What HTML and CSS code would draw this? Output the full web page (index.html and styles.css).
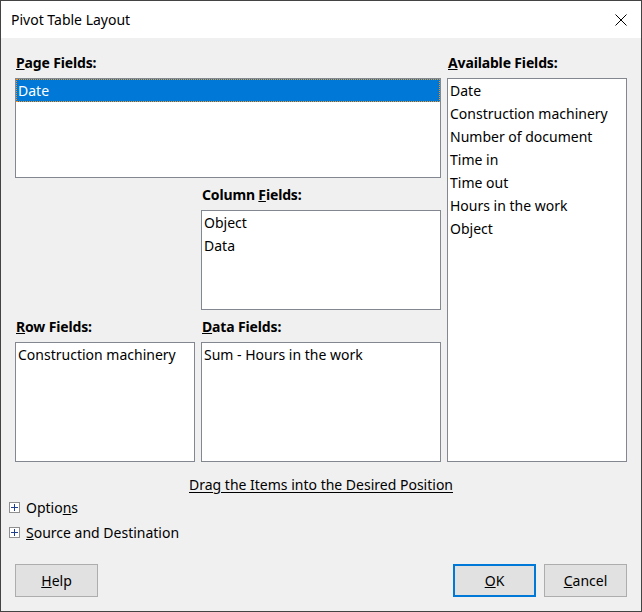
FILE: index.html
```html
<!DOCTYPE html>
<html>
<head>
<meta charset="utf-8">
<title>Pivot Table Layout</title>
<link rel="stylesheet" href="styles.css">
</head>
<body>
<div class="dialog">
  <div class="titlebar">
    <span class="title">Pivot Table Layout</span>
    <svg class="close" width="12" height="12" viewBox="0 0 12 12"><path d="M0.5 0.5 L11.5 11.5 M11.5 0.5 L0.5 11.5" stroke="#000" stroke-width="1" fill="none"/></svg>
  </div>
  <div class="content">
    <div class="layout">
      <div class="label l-page"><u>P</u>age Fields:</div>
      <div class="label l-avail"><u>A</u>vailable Fields:</div>
      <div class="list b-page">
        <div class="item selected">Date</div>
      </div>
      <div class="list b-avail">
        <div class="item">Date</div>
        <div class="item">Construction machinery</div>
        <div class="item">Number of document</div>
        <div class="item">Time in</div>
        <div class="item">Time out</div>
        <div class="item">Hours in the work</div>
        <div class="item">Object</div>
      </div>
      <div class="label l-col">Column <u>F</u>ields:</div>
      <div class="list b-col">
        <div class="item">Object</div>
        <div class="item">Data</div>
      </div>
      <div class="label l-row"><u>R</u>ow Fields:</div>
      <div class="label l-data"><u>D</u>ata Fields:</div>
      <div class="list b-row">
        <div class="item">Construction machinery</div>
      </div>
      <div class="list b-data">
        <div class="item">Sum - Hours in the work</div>
      </div>
    </div>
    <div class="hint"><span class="hint-text">Drag the Items into the Desired Position</span></div>
    <div class="expanders">
      <div class="expander"><span class="plus"></span><span>Optio<u>n</u>s</span></div>
      <div class="expander"><span class="plus"></span><span><u>S</u>ource and Destination</span></div>
    </div>
    <div class="buttons">
      <button class="btn"><u>H</u>elp</button>
      <div class="btn-group">
        <button class="btn btn-default"><u>O</u>K</button>
        <button class="btn"><u>C</u>ancel</button>
      </div>
    </div>
  </div>
</div>
</body>
</html>
```

FILE: styles.css
```css
html, body {
  margin: 0;
  padding: 0;
  background: #f0f0f0;
}

.dialog {
  width: 642px;
  height: 612px;
  box-sizing: border-box;
  border: 1px solid #434343;
  background: #f0f0f0;
  display: flex;
  flex-direction: column;
  font-family: "Noto Sans", "Open Sans", sans-serif;
  font-size: 14px;
  color: #000;
}

.titlebar {
  height: 37px;
  flex: none;
  background: #fff;
  display: flex;
  align-items: center;
  justify-content: space-between;
  padding: 0 14px 0 10px;
}

.title {
  font-size: 14px;
  line-height: 19px;
}

.close {
  display: block;
}

.content {
  flex: 1;
  display: flex;
  flex-direction: column;
  padding: 15px 14px 14px 14px;
}

.layout {
  display: grid;
  grid-template-columns: 180px 240px 180px;
  grid-template-rows: 25px 100px 32px 100px 32px 120px;
  column-gap: 6px;
}

.label {
  font-weight: bold;
  line-height: 19px;
  align-self: end;
  margin-bottom: 6px;
  padding-left: 1px;
  letter-spacing: -0.15px;
}

.l-page { grid-column: 1 / 3; grid-row: 1; }
.l-avail { grid-column: 3; grid-row: 1; }
.b-page { grid-column: 1 / 3; grid-row: 2; }
.b-avail { grid-column: 3; grid-row: 2 / 7; }
.l-col { grid-column: 2; grid-row: 3; }
.b-col { grid-column: 2; grid-row: 4; }
.l-row { grid-column: 1; grid-row: 5; }
.l-data { grid-column: 2; grid-row: 5; }
.b-row { grid-column: 1; grid-row: 6; }
.b-data { grid-column: 2; grid-row: 6; }

.list {
  background: #fff;
  border: 1px solid #828790;
  box-sizing: border-box;
  overflow: hidden;
}

.item {
  height: 23px;
  line-height: 23px;
  padding: 0 2px;
  white-space: nowrap;
  box-sizing: border-box;
}

.item.selected {
  background: #0078d7;
  color: #fff;
  border: 1px dotted #f7941d;
  line-height: 21px;
  padding: 0 1px;
}

.hint {
  margin-top: 13px;
  text-align: center;
  line-height: 19px;
}

.hint-text {
  text-decoration: underline;
  text-underline-offset: 2px;
}

.expanders {
  margin-top: 1px;
  margin-left: -6px;
}

.expander {
  height: 25px;
  display: flex;
  align-items: center;
  gap: 6px;
  line-height: 19px;
}

.plus {
  width: 11px;
  height: 11px;
  box-sizing: border-box;
  border: 1px solid #8f8f8f;
  background: #fff;
  position: relative;
  flex: none;
}

.plus::before,
.plus::after {
  content: "";
  position: absolute;
  background: #1f3f8f;
}

.plus::before {
  left: 1px;
  right: 1px;
  top: 4px;
  height: 1px;
}

.plus::after {
  top: 1px;
  bottom: 1px;
  left: 4px;
  width: 1px;
}

.buttons {
  margin-top: auto;
  display: flex;
  justify-content: space-between;
  align-items: flex-end;
}

.btn-group {
  display: flex;
  gap: 8px;
}

.btn {
  width: 83px;
  height: 33px;
  box-sizing: border-box;
  background: #e1e1e1;
  border: 1px solid #adadad;
  font-family: "Noto Sans", "Open Sans", sans-serif;
  font-size: 14px;
  color: #000;
  padding: 0;
  border-radius: 0;
}

.btn-default {
  border: 2px solid #0078d7;
}
```
